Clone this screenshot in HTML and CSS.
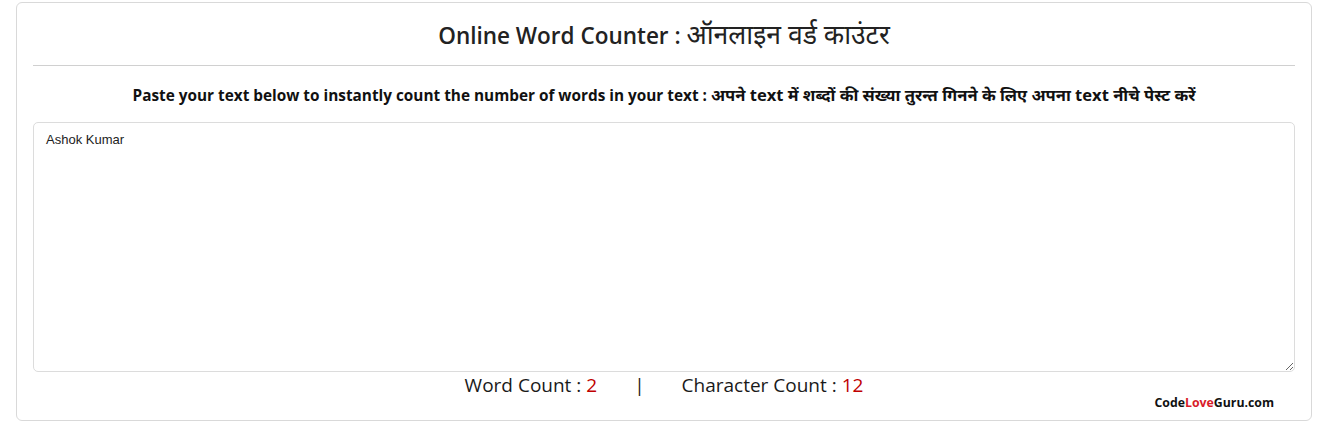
FILE: index.html
```html
<!DOCTYPE html>
<html lang="hi">
<head>
<meta charset="utf-8">
<title>Online Word Counter</title>
<link rel="stylesheet" href="styles.css">
</head>
<body>
<div class="page">
  <div class="card">
    <h1 class="title"><span class="title-en">Online Word Counter :</span> <span class="title-hi">ऑनलाइन वर्ड काउंटर</span></h1>
    <hr class="rule">
    <p class="subtitle">Paste your text below to instantly count the number of words in your text : <span class="sub-hi">अपने text में शब्दों की संख्या तुरन्त गिनने के लिए अपना text नीचे पेस्ट करें</span></p>
    <textarea class="input">Ashok Kumar</textarea>
    <div class="counts">
      <span class="count">Word Count : <span class="num">2</span></span>
      <span class="sep">|</span>
      <span class="count">Character Count : <span class="num">12</span></span>
    </div>
    <div class="brand">Code<span class="love">Love</span>Guru.com</div>
  </div>
</div>
</body>
</html>
```

FILE: styles.css
```css
html, body {
  margin: 0;
  padding: 0;
  background: #ffffff;
}

body {
  font-family: "Open Sans", "Noto Sans", "DejaVu Sans", sans-serif;
  color: #212121;
}

.page {
  padding: 2px 21px 0 16px;
}

.card {
  border: 1px solid #d9d9d9;
  border-radius: 6px;
  padding: 15px 16px 11px 16px;
  display: flex;
  flex-direction: column;
}

.title {
  margin: 0;
  text-align: center;
  font-size: 22.5px;
  line-height: 32px;
  font-weight: 600;
  color: #222;
}

.title-hi {
  font-weight: 400;
  font-size: 1.18em;
  line-height: 32px;
}

.rule {
  border: 0;
  border-top: 1px solid #d0d0d0;
  margin: 13px 0 0 0;
  height: 0;
}

.subtitle {
  margin: 18px 0 16px 0;
  text-align: center;
  font-size: 15.35px;
  line-height: 22px;
  font-weight: 700;
  color: #111;
}

.sub-hi {
  font-size: 1.08em;
}

.input {
  display: block;
  box-sizing: border-box;
  width: 100%;
  height: 250px;
  margin: 0;
  padding: 8px 12px;
  border: 1px solid #dcdcdc;
  border-radius: 5px;
  font-family: "Liberation Sans", Arial, sans-serif;
  font-size: 13px;
  line-height: 18px;
  color: #222;
  resize: vertical;
  outline: none;
}

.counts {
  display: flex;
  justify-content: center;
  align-items: center;
  gap: 37px;
  font-size: 19px;
  line-height: 26px;
  color: #1a1a1a;
  margin-top: 0;
}

.num {
  color: #c00000;
}

.sep {
  font-size: 19px;
}

.brand {
  text-align: right;
  padding-right: 21px;
  font-size: 12.3px;
  line-height: 12px;
  font-weight: 700;
  color: #111;
  margin-top: -1px;
}

.love {
  color: #d81b2a;
}
```
